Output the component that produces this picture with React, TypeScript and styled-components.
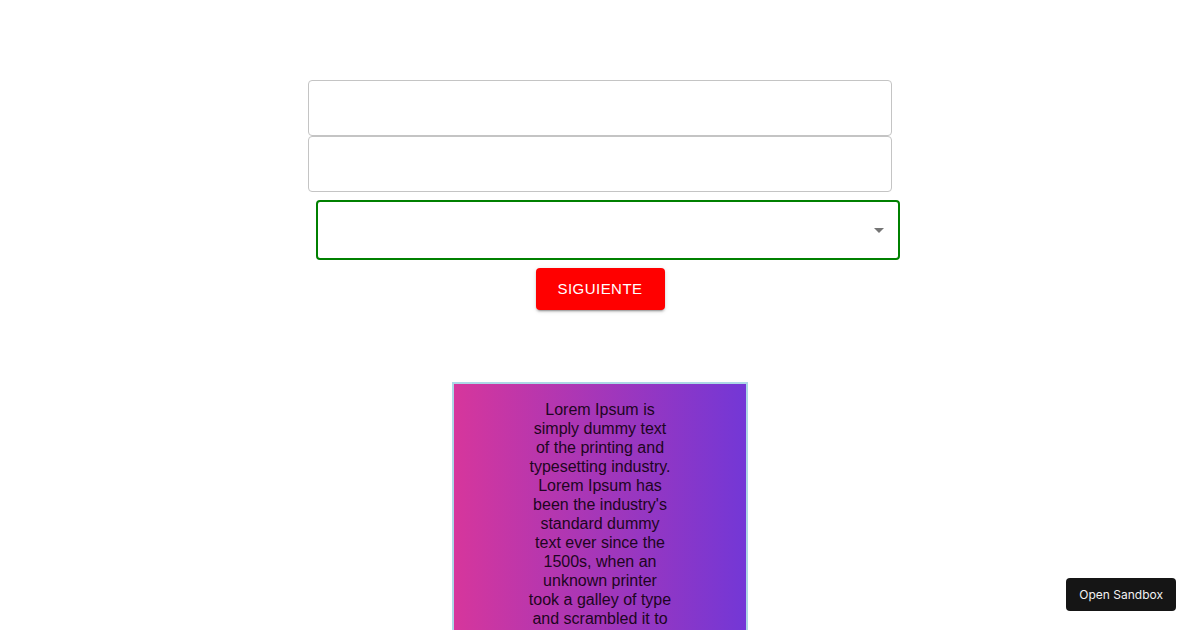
import React from 'react';
import styled, { createGlobalStyle } from 'styled-components';

const GlobalStyle = createGlobalStyle`
  html, body {
    margin: 0;
    padding: 0;
    overflow: hidden;
    background: #fff;
    font-family: Roboto, "Liberation Sans", sans-serif;
  }
`;

const Page = styled.div`
  padding-top: 80px;
  display: flex;
  flex-direction: column;
  align-items: center;
`;

const Form = styled.form`
  width: 584px;
  display: flex;
  flex-direction: column;
`;

const TextField = styled.input`
  box-sizing: border-box;
  width: 100%;
  height: 56px;
  border: 1px solid #c4c4c4;
  border-radius: 4px;
  padding: 16px 14px;
  font: 16px Roboto, sans-serif;
  outline: none;
  background: #fff;
`;

const SelectBox = styled.div`
  box-sizing: border-box;
  width: 100%;
  height: 60px;
  margin: 8px 0 0 8px;
  border: 2px solid green;
  border-radius: 4px;
  display: flex;
  align-items: center;
  justify-content: flex-end;
  padding-right: 14px;
`;

const Arrow = styled.span`
  width: 0;
  height: 0;
  border-left: 5px solid transparent;
  border-right: 5px solid transparent;
  border-top: 5px solid #757575;
  margin-top: 1px;
`;

const ButtonRow = styled.div`
  display: flex;
  justify-content: center;
  margin-top: 8px;
`;

const NextButton = styled.button`
  background: #ff0000;
  color: #fff;
  border: none;
  border-radius: 4px;
  padding: 8px 22px;
  font: 400 15px/1.75 "Liberation Sans", Arial, sans-serif;
  letter-spacing: 0.46px;
  text-transform: uppercase;
  box-shadow: 0 3px 1px -2px rgba(0,0,0,0.2), 0 2px 2px 0 rgba(0,0,0,0.14), 0 1px 5px 0 rgba(0,0,0,0.12);
  cursor: pointer;
`;

const GradientCard = styled.div`
  box-sizing: border-box;
  width: 296px;
  margin-top: 72px;
  border: 2px solid lightblue;
  background: linear-gradient(to right, #d6369c, #7337d6);
  overflow: hidden;
`;

const CardText = styled.p`
  width: 50%;
  margin: 16px auto;
  text-align: center;
  color: #1e0522;
  font: 16px/19px "Liberation Sans", Arial, sans-serif;
`;

const SandboxButton = styled.a`
  position: fixed;
  right: 24px;
  bottom: 19px;
  background: #151515;
  color: #f2f2f2;
  border-radius: 4px;
  padding: 0 13px;
  height: 33px;
  display: flex;
  align-items: center;
  font: 12px Inter, "Liberation Sans", sans-serif;
  text-decoration: none;
`;

const lorem =
  "Lorem Ipsum is simply dummy text of the printing and typesetting industry. Lorem Ipsum has been the industry's standard dummy text ever since the 1500s, when an unknown printer took a galley of type and scrambled it to make a type specimen book. It has survived not only five centuries, but also the leap into electronic typesetting, remaining essentially unchanged.";

export default function App() {
  return (
    <>
      <GlobalStyle />
      <Page>
        <Form onSubmit={(e) => e.preventDefault()}>
          <TextField type="text" />
          <TextField type="text" />
          <SelectBox>
            <Arrow />
          </SelectBox>
          <ButtonRow>
            <NextButton type="submit">Siguiente</NextButton>
          </ButtonRow>
        </Form>
        <GradientCard>
          <CardText>{lorem}</CardText>
        </GradientCard>
      </Page>
      <SandboxButton href="#">Open Sandbox</SandboxButton>
    </>
  );
}
